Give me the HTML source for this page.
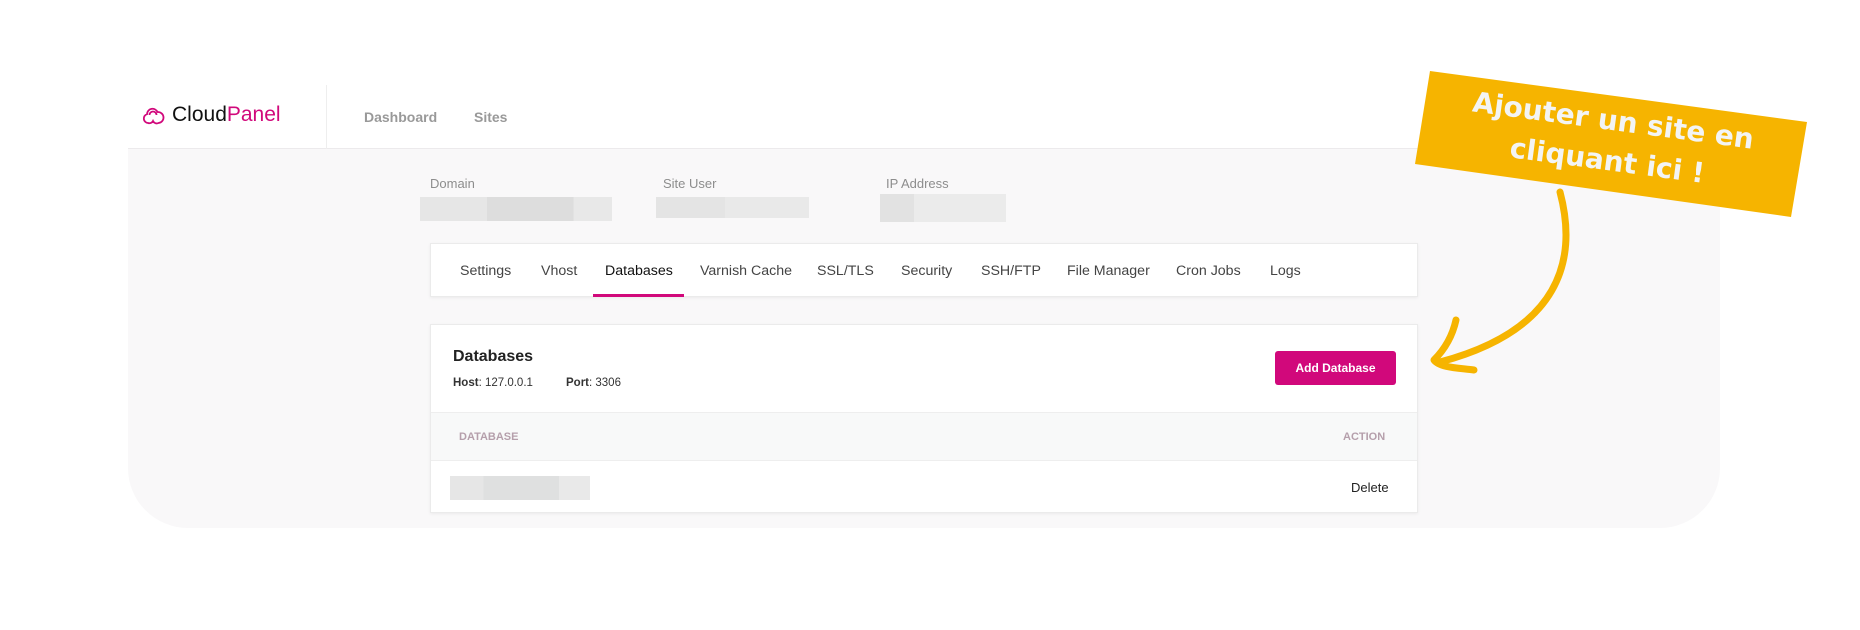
<!DOCTYPE html>
<html><head><style>
*{margin:0;padding:0;box-sizing:border-box}
body{width:1860px;height:630px;background:#fff;position:relative;overflow:hidden;font-family:"Liberation Sans",Arial,sans-serif}
.abs{position:absolute}
.outer{left:128px;top:85px;width:1592px;height:443px;background:#f9f8f9;border-radius:0 0 60px 60px;overflow:hidden}
.hdr{left:0;top:0;width:1592px;height:64px;background:#fff;border-bottom:1px solid #eceaec}
.lbl{font-size:13px;color:#8d8d8d}
.bar{background:#e4e4e4}
.tab{font-size:14.2px;color:#444;top:263px}
.card{background:#fff;border:1px solid #ebebeb;box-shadow:0 1px 3px rgba(0,0,0,.06)}
</style></head><body>
<div class="abs outer">
  <div class="abs hdr"></div>
  <div class="abs" style="left:198px;top:0;width:1px;height:64px;background:#eee"></div>
</div>
<svg class="abs" style="left:141px;top:104px" width="24" height="22" viewBox="0 0 24 22"><path d="M7 19a4.5 4.5 0 0 1-1-8.8A5.5 5.5 0 0 1 16.5 8a4.5 4.5 0 0 1 1 11 4 4 0 0 1-5.5-2 4 4 0 0 1-5 2z M8.5 11a3.5 3.5 0 0 1 7 0" fill="none" stroke="#d1087b" stroke-width="1.8"/></svg>
<div class="abs" style="left:172px;top:103px;font-size:21px;color:#111">Cloud<span style="color:#d1087b">Panel</span></div>
<div class="abs" style="left:364px;top:109px;font-size:14px;font-weight:bold;color:#999">Dashboard</div>
<div class="abs" style="left:474px;top:109px;font-size:14px;font-weight:bold;color:#999">Sites</div>

<div class="abs lbl" style="left:430px;top:176px">Domain</div>
<div class="abs bar" style="left:420px;top:197px;width:192px;height:24px;background:linear-gradient(90deg,#e6e6e6 0 35%,#dddddd 35% 80%,#e8e8e8 80%)"></div>
<div class="abs lbl" style="left:663px;top:176px">Site User</div>
<div class="abs bar" style="left:656px;top:197px;width:153px;height:21px;background:linear-gradient(90deg,#e4e4e4 0 45%,#e9e9e9 45%)"></div>
<div class="abs lbl" style="left:886px;top:176px">IP Address</div>
<div class="abs bar" style="left:880px;top:194px;width:126px;height:28px;background:linear-gradient(90deg,#e2e2e2 0 27%,#ebebeb 27%)"></div>

<div class="abs card" style="left:430px;top:243px;width:988px;height:54px"></div>
<div class="abs tab" style="left:460px">Settings</div>
<div class="abs tab" style="left:541px">Vhost</div>
<div class="abs tab" style="left:605px;color:#111">Databases</div>
<div class="abs tab" style="left:700px">Varnish Cache</div>
<div class="abs tab" style="left:817px">SSL/TLS</div>
<div class="abs tab" style="left:901px">Security</div>
<div class="abs tab" style="left:981px">SSH/FTP</div>
<div class="abs tab" style="left:1067px">File Manager</div>
<div class="abs tab" style="left:1176px">Cron Jobs</div>
<div class="abs tab" style="left:1270px">Logs</div>
<div class="abs" style="left:593px;top:294px;width:91px;height:3px;background:#d1087b"></div>

<div class="abs card" style="left:430px;top:324px;width:988px;height:189px"></div>
<div class="abs" style="left:453px;top:348px;font-size:16px;font-weight:bold;color:#222">Databases</div>
<div class="abs" style="left:453px;top:377px;font-size:11.5px;color:#333"><b>Host</b>: 127.0.0.1</div>
<div class="abs" style="left:566px;top:377px;font-size:11.5px;color:#333"><b>Port</b>: 3306</div>
<div class="abs" style="left:1275px;top:351px;width:121px;height:34px;background:#d1087b;border-radius:3px;color:#fff;font-size:12px;font-weight:bold;text-align:center;line-height:34px">Add Database</div>
<div class="abs" style="left:431px;top:412px;width:986px;height:49px;background:#f8f9f9;border-top:1px solid #eee;border-bottom:1px solid #eee"></div>
<div class="abs" style="left:459px;top:431px;font-size:11px;font-weight:bold;color:#b59fab">DATABASE</div>
<div class="abs" style="left:1343px;top:431px;font-size:11px;font-weight:bold;color:#b59fab">ACTION</div>
<div class="abs" style="left:450px;top:476px;width:140px;height:24px;background:linear-gradient(90deg,#e6e6e6 0 24%,#dfe0e0 24% 78%,#e9e9e9 78%)"></div>
<div class="abs" style="left:1351px;top:480px;font-size:13px;color:#222">Delete</div>

<svg class="abs" style="left:0;top:0" width="1860" height="630">
<polygon points="1430,71 1807,122 1791,217 1415,164" fill="#f6b400"/>
<path d="M1560 192 C1578 260 1560 330 1440 362" fill="none" stroke="#f6b400" stroke-width="7" stroke-linecap="round"/>
<path d="M1456 320 C1452 338 1444 350 1434 360 C1440 368 1460 368 1474 370" fill="none" stroke="#f6b400" stroke-width="7" stroke-linecap="round" stroke-linejoin="round"/>
<g fill="#f3f4f4" font-family="DejaVu Sans,sans-serif" font-weight="bold" font-size="28" text-anchor="middle">
<text transform="translate(1612 130) rotate(7.6)">Ajouter un site en</text>
<text transform="translate(1606 170) rotate(7.6)">cliquant ici !</text>
</g>
</svg>
</body></html>
